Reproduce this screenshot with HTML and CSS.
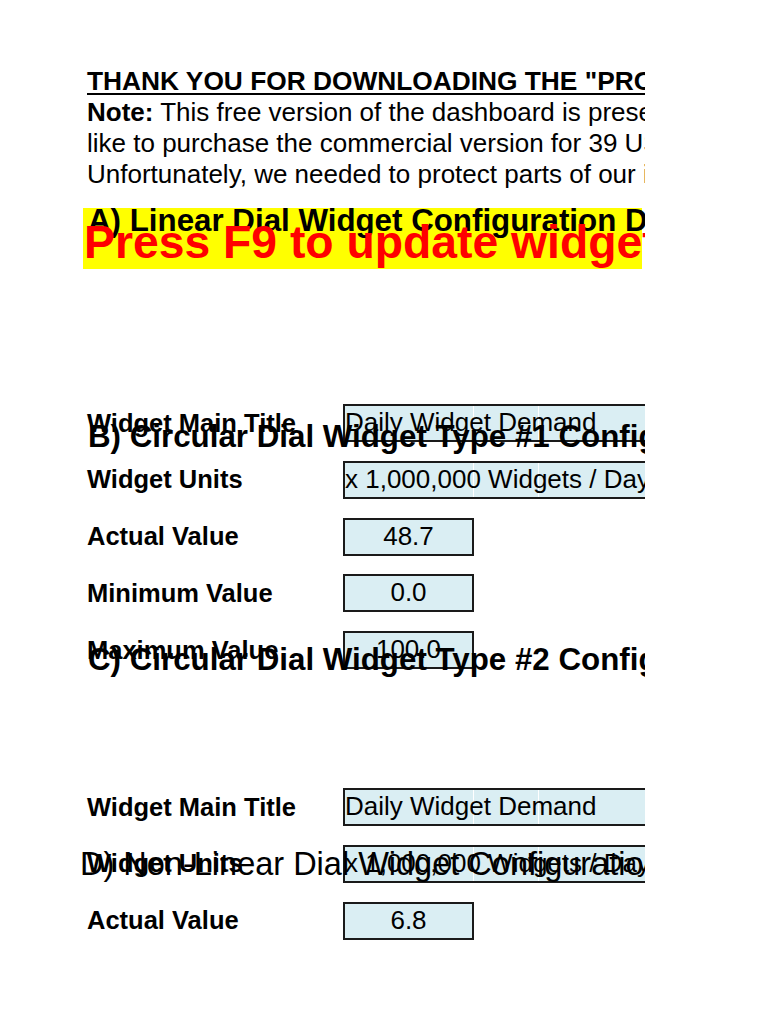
FILE: index.html
```html
<!DOCTYPE html>
<html lang="en">
<head>
<meta charset="utf-8">
<title>Dashboard Widget Configuration</title>
<link rel="stylesheet" href="styles.css">
</head>
<body>
<div class="sheet">
  <div class="intro">
    <p class="title">THANK YOU FOR DOWNLOADING THE "PROFESSIONAL DASHBOARD" TEMPLATE</p>
    <p><b>Note:</b> This free version of the dashboard is presented as is. If you would</p>
    <p>like to purchase the commercial version for 39 USD, please visit our website.</p>
    <p>Unfortunately, we needed to protect parts of our intellectual property.</p>
  </div>

  <div class="band">
    <div class="band-head">A) Linear Dial Widget Configuration Data</div>
    <div class="band-press">Press F9 to update widgets</div>
  </div>

  <section class="section sec-b">
    <h2 class="ovl ovl-b">B) Circular Dial Widget Type #1 Configuration Data</h2>
    <div class="row"><span class="label">Widget Main Title</span><span class="box wide">Daily Widget Demand</span></div>
    <div class="row"><span class="label">Widget Units</span><span class="box wide">x 1,000,000 Widgets / Day</span></div>
    <div class="row"><span class="label">Actual Value</span><span class="box num">48.7</span></div>
    <div class="row"><span class="label">Minimum Value</span><span class="box num">0.0</span></div>
    <div class="row"><span class="label">Maximum Value</span><span class="box num">100.0</span></div>
    <h2 class="ovl ovl-c">C) Circular Dial Widget Type #2 Configuration Data</h2>
  </section>

  <section class="section sec-c">
    <h2 class="ovl ovl-d">D) Non-Linear Dial Widget Configuration Data</h2>
    <div class="row"><span class="label">Widget Main Title</span><span class="box wide">Daily Widget Demand</span></div>
    <div class="row"><span class="label">Widget Units</span><span class="box wide">x 1,000,000 Widgets / Day</span></div>
    <div class="row"><span class="label">Actual Value</span><span class="box num">6.8</span></div>
  </section>
</div>
</body>
</html>
```

FILE: styles.css
```css
html, body {
  margin: 0;
  padding: 0;
  background: #ffffff;
}

body {
  font-family: "Liberation Sans", Arial, sans-serif;
  color: #000000;
  width: 768px;
  height: 1024px;
  overflow: hidden;
}

.sheet {
  margin-left: 80px;
  width: 565px;
  height: 1024px;
  overflow: hidden;
  padding-top: 66px;
  box-sizing: border-box;
}

.intro {
  padding-left: 7px;
}

.intro p {
  margin: 0;
  font-size: 26px;
  line-height: 31px;
  height: 31px;
  white-space: nowrap;
}

.intro .title {
  font-weight: bold;
  font-size: 26.3px;
  text-decoration: underline;
  text-decoration-thickness: 2px;
  text-underline-offset: 3px;
}

.band {
  margin-top: 18px;
  margin-left: 3px;
  width: 559px;
  height: 61px;
  background: #ffff00;
  white-space: nowrap;
}

.band-head {
  font-weight: bold;
  font-size: 31.3px;
  line-height: 26px;
  height: 26px;
  padding-left: 5px;
}

.band-press {
  font-weight: bold;
  font-size: 46.3px;
  line-height: 17px;
  height: 17px;
  color: #ff0000;
  padding-left: 1px;
}

.section {
  position: relative;
  display: flex;
  flex-direction: column;
  gap: 18.75px;
}

.sec-b {
  margin-top: 135px;
}

.sec-c {
  margin-top: 119px;
}

.row {
  display: flex;
  align-items: center;
  height: 38px;
  padding-left: 7px;
}

.label {
  width: 256px;
  flex: none;
  font-weight: bold;
  font-size: 25.5px;
  white-space: nowrap;
}

.box {
  flex: none;
  box-sizing: border-box;
  height: 38px;
  border: 2px solid #1a1a1a;
  background: #daeef3;
  font-size: 26px;
  line-height: 33px;
  white-space: nowrap;
  overflow: hidden;
}

.box.wide {
  width: 420px;
  padding-left: 0;
  background-image:
    linear-gradient(#ffffff, #ffffff),
    linear-gradient(#ffffff, #ffffff);
  background-size: 1px 100%, 1px 100%;
  background-position: 128px 0, 193px 0;
  background-repeat: no-repeat;
  background-color: #daeef3;
}

.box.num {
  width: 131px;
  text-align: center;
}

.ovl {
  position: absolute;
  left: 8px;
  margin: 0;
  font-weight: bold;
  font-size: 31.3px;
  line-height: 30px;
  white-space: nowrap;
  pointer-events: none;
}

.ovl-b {
  top: 18px;
}

.ovl-c {
  top: 241px;
}

.ovl-d {
  top: 61px;
  left: 0;
  font-weight: normal;
  font-size: 32.5px;
}
```
